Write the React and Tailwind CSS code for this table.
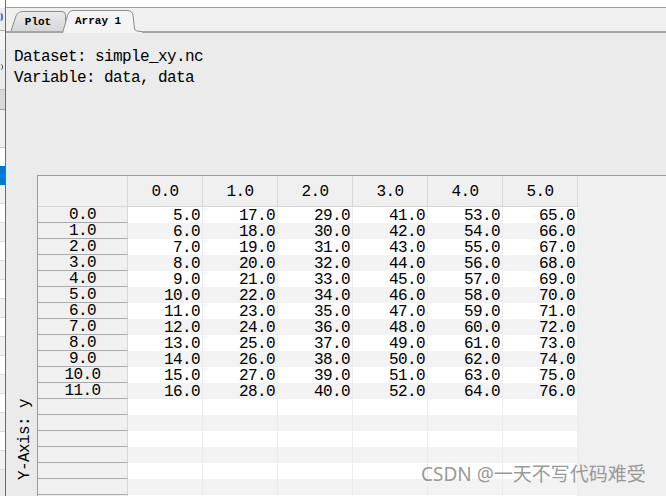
import React from 'react'

const mono = { fontFamily: '"Liberation Mono", "DejaVu Sans Mono", monospace' }

const cols = [0, 1, 2, 3, 4, 5]
const rows = [0, 1, 2, 3, 4, 5, 6, 7, 8, 9, 10, 11]
const emptyRows = [12, 13, 14, 15, 16, 17, 18]

function LeftStrip() {
  // slice of the window behind, mostly hidden
  return (
    <div className="flex w-[6px] shrink-0 flex-col overflow-hidden border-r border-[#6a6a6a] [&>div]:shrink-0">
      <div className="h-[8px] bg-white" />
      <div className="h-[22px] bg-[#ececec] pt-[5px]">
        <div className="h-[8px] w-[3px] rounded-r-sm border-r-2 border-[#4a78b8]" />
      </div>
      <div className="h-[1px] bg-[#b0b0b0]" />
      <div className="h-[18px] bg-[#f4f4f4]" />
      <div className="h-[40px] bg-[#ececec] pt-[15px]">
        <div className="h-[6px] w-[3px] rounded-r-full border-r border-[#444]" />
      </div>
      <div className="h-[1px] bg-[#c0c0c0]" />
      <div className="h-[19px] bg-[#d9d9d9]" />
      <div className="h-[1px] bg-[#a0a0a0]" />
      <div className="h-[37px] bg-[#f0f0f0]" />
      <div className="h-[1px] bg-[#c8c8c8]" />
      <div className="h-[18px] bg-white" />
      <div className="h-[19px] bg-[#0078d7]" />
      {[0, 1, 2, 3, 4, 5, 6, 7, 8, 9, 10, 11, 12, 13, 14].map(i => (
        <div key={i} className={(i % 2 ? 'bg-white' : 'bg-[#f2f2f2]') + ' h-[19px] border-b border-[#dcdcdc]'} />
      ))}
    </div>
  )
}

function Tabs() {
  return (
    <div className="flex h-[25px] shrink-0 items-end border-b-2 border-[#a6a6a6] bg-[#f0f0f0] pl-[4px]">
      <div className="relative flex h-[20px] w-[56px] items-center justify-center pt-[2px]">
        <svg className="absolute inset-0" width="56" height="20" viewBox="0 0 56 20">
          <defs>
            <linearGradient id="pg" x1="0" y1="0" x2="0" y2="1">
              <stop offset="0" stopColor="#ececec" />
              <stop offset="1" stopColor="#d6d6d6" />
            </linearGradient>
          </defs>
          <path d="M1 20 L6 5 Q8 0.5 13 0.5 L52 0.5 Q55.5 0.5 55.5 4 L55.5 20" fill="url(#pg)" stroke="#8c8c8c" />
        </svg>
        <span className="relative text-[11px] font-bold text-black" style={mono}>Plot</span>
      </div>
      <div className="relative -mb-[2px] -ml-[4px] flex h-[23px] w-[80px] items-center pl-[13px]">
        <svg className="absolute inset-0" width="80" height="23" viewBox="0 0 80 23">
          <path d="M0.5 23 L6 4 Q7.5 0.5 11 0.5 L65 0.5 Q70 0.5 71 5 L72.5 19 Q73 21.5 80 21.5 L80 23 Z" fill="#f4f4f4" stroke="none" />
          <path d="M0.5 23 L6 4 Q7.5 0.5 11 0.5 L65 0.5 Q70 0.5 71 5 L72.5 19 Q73 21.5 80 21.5" fill="none" stroke="#8c8c8c" />
        </svg>
        <span className="relative text-[11px] font-bold text-black" style={mono}>Array 1</span>
      </div>
    </div>
  )
}

function Grid() {
  return (
    <div className="min-h-0 flex-1 overflow-hidden border-l border-t border-[#9c9c9c] bg-[#f0f0f0] text-[16px] tracking-[-0.6px] text-black" style={mono}>
      <div className="flex h-[31px]">
        <div className="w-[90px] shrink-0 border-b border-r border-[#d6d6d6]" />
        {cols.map(c => (
          <div key={c} className="flex w-[75px] shrink-0 items-center justify-center border-b border-r border-[#d6d6d6] pt-[1px]">
            {c}.0
          </div>
        ))}
      </div>
      {rows.concat(emptyRows).map(r => (
        <div key={r} className="flex h-[16px] leading-[14px]">
          <div className="w-[90px] shrink-0 border-b border-r border-[#aaaaaa] border-r-[#d6d6d6] pt-[2px] text-center leading-[13px]">
            {r < 12 ? r + '.0' : ''}
          </div>
          {cols.map(c => (
            <div key={c} className={(r % 2 ? 'bg-[#f3f3f3]' : 'bg-white') + ' w-[75px] shrink-0 border-r border-[#ececec] pr-[2px] pt-[2px] text-right'}>
              {r < 12 ? 5 + r + 12 * c + '.0' : ''}
            </div>
          ))}
        </div>
      ))}
    </div>
  )
}

export default function App() {
  return (
    <div className="relative flex h-[496px] w-[666px] overflow-hidden bg-[#ebebeb]">
      <LeftStrip />
      <div className="flex min-w-0 flex-1 flex-col overflow-hidden">
        <div className="h-[8px] shrink-0 border-b border-[#a0a0a0] bg-white" />
        <Tabs />
        <div className="flex min-h-0 flex-1 flex-col bg-[#ebebeb]">
          <div className="shrink-0 pl-2 pt-[14px] text-[16px] leading-[21px] tracking-[-0.6px] text-black" style={mono}>
            <div>Dataset: simple_xy.nc</div>
            <div>Variable: data, data</div>
          </div>
          <div className="mt-[86px] flex min-h-0 flex-1">
            <div className="flex w-[31px] shrink-0 flex-col items-end justify-end pb-[16px] pr-[4px]">
              <div className="rotate-180 text-[16px] leading-[16px] tracking-[-0.6px] text-black [writing-mode:vertical-rl]" style={mono}>
                Y-Axis: y
              </div>
            </div>
            <Grid />
          </div>
        </div>
      </div>
      <div className="absolute left-[421px] top-[460px] text-[19px] leading-[28px] text-[#8f8f8f] opacity-90" style={{ fontFamily: '"Noto Sans", "Noto Sans CJK SC", sans-serif' }}>
        CSDN @一天不写代码难受
      </div>
    </div>
  )
}
